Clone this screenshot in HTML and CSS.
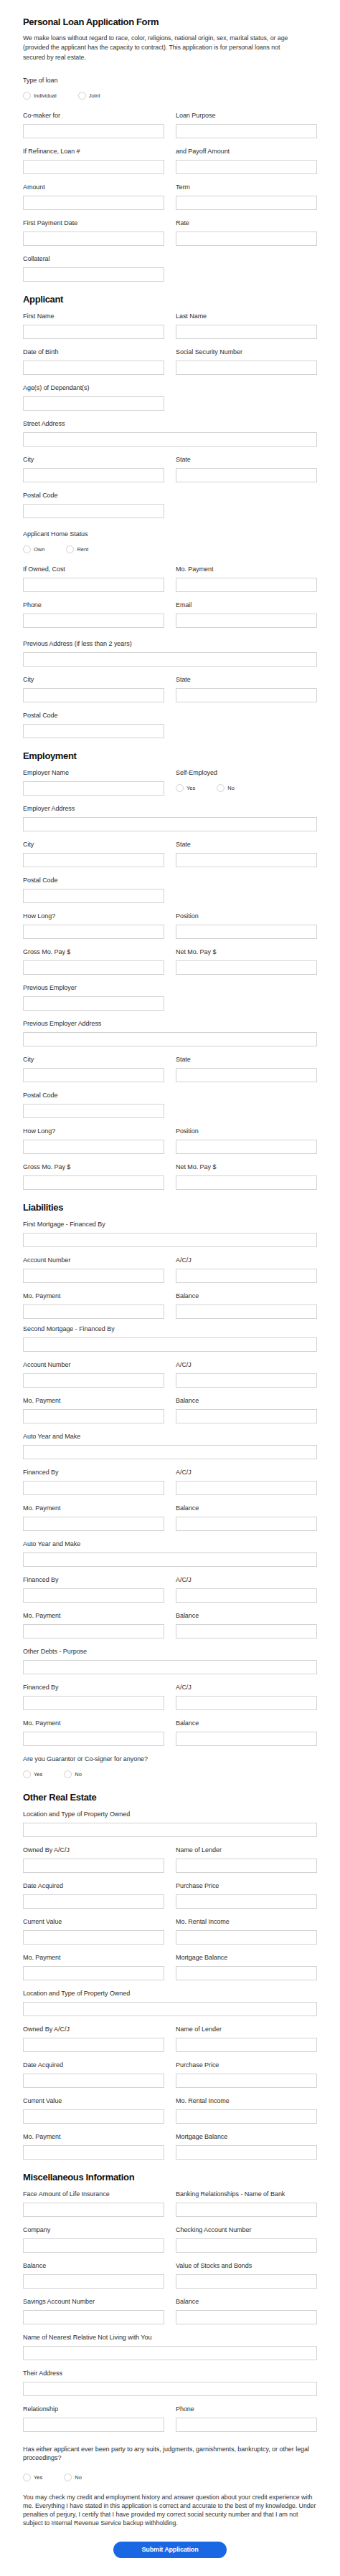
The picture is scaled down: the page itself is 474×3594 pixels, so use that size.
FILE: index.html
```html
<!DOCTYPE html>
<html lang="en">
<head>
<meta charset="utf-8">
<title>Personal Loan Application Form</title>
<link rel="stylesheet" href="styles.css">
</head>
<body>
<main class="page">
  <h1 class="title">Personal Loan Application Form</h1>
  <p class="intro">We make loans without regard to race, color, religions, national origin, sex, marital status, or age (provided the applicant has the capacity to contract). This application is for personal loans not secured by real estate.</p>

  <form class="form">
    <div class="radio-group">
      <span class="label">Type of loan</span>
      <div class="options">
        <label class="opt"><input type="radio" name="type"><span>Individual</span></label>
        <label class="opt"><input type="radio" name="type"><span>Joint</span></label>
      </div>
    </div>
    <div class="row">
      <div class="field"><label class="label">Co-maker for</label><input class="input" type="text"></div>
      <div class="field"><label class="label">Loan Purpose</label><input class="input" type="text"></div>
    </div>
    <div class="row">
      <div class="field"><label class="label">If Refinance, Loan #</label><input class="input" type="text"></div>
      <div class="field"><label class="label">and Payoff Amount</label><input class="input" type="text"></div>
    </div>
    <div class="row">
      <div class="field"><label class="label">Amount</label><input class="input" type="text"></div>
      <div class="field"><label class="label">Term</label><input class="input" type="text"></div>
    </div>
    <div class="row">
      <div class="field"><label class="label">First Payment Date</label><input class="input" type="text"></div>
      <div class="field"><label class="label">Rate</label><input class="input" type="text"></div>
    </div>
    <div class="row">
      <div class="field"><label class="label">Collateral</label><input class="input" type="text"></div>
    </div>

    <h2 class="section">Applicant</h2>
    <div class="row">
      <div class="field"><label class="label">First Name</label><input class="input" type="text"></div>
      <div class="field"><label class="label">Last Name</label><input class="input" type="text"></div>
    </div>
    <div class="row">
      <div class="field"><label class="label">Date of Birth</label><input class="input" type="text"></div>
      <div class="field"><label class="label">Social Security Number</label><input class="input" type="text"></div>
    </div>
    <div class="row">
      <div class="field"><label class="label">Age(s) of Dependant(s)</label><input class="input" type="text"></div>
    </div>
    <div class="row">
      <div class="field full"><label class="label">Street Address</label><input class="input" type="text"></div>
    </div>
    <div class="row">
      <div class="field"><label class="label">City</label><input class="input" type="text"></div>
      <div class="field"><label class="label">State</label><input class="input" type="text"></div>
    </div>
    <div class="row">
      <div class="field"><label class="label">Postal Code</label><input class="input" type="text"></div>
    </div>
    <div class="radio-group spaced">
      <span class="label">Applicant Home Status</span>
      <div class="options">
        <label class="opt"><input type="radio" name="home"><span>Own</span></label>
        <label class="opt"><input type="radio" name="home"><span>Rent</span></label>
      </div>
    </div>
    <div class="row">
      <div class="field"><label class="label">If Owned, Cost</label><input class="input" type="text"></div>
      <div class="field"><label class="label">Mo. Payment</label><input class="input" type="text"></div>
    </div>
    <div class="row">
      <div class="field"><label class="label">Phone</label><input class="input" type="text"></div>
      <div class="field"><label class="label">Email</label><input class="input" type="text"></div>
    </div>
    <div class="row spaced">
      <div class="field full"><label class="label">Previous Address (if less than 2 years)</label><input class="input" type="text"></div>
    </div>
    <div class="row">
      <div class="field"><label class="label">City</label><input class="input" type="text"></div>
      <div class="field"><label class="label">State</label><input class="input" type="text"></div>
    </div>
    <div class="row">
      <div class="field"><label class="label">Postal Code</label><input class="input" type="text"></div>
    </div>

    <h2 class="section">Employment</h2>
    <div class="row">
      <div class="field"><label class="label">Employer Name</label><input class="input" type="text"></div>
      <div class="field">
        <span class="label">Self-Employed</span>
        <div class="options">
          <label class="opt"><input type="radio" name="self"><span>Yes</span></label>
          <label class="opt"><input type="radio" name="self"><span>No</span></label>
        </div>
      </div>
    </div>
    <div class="row">
      <div class="field full"><label class="label">Employer Address</label><input class="input" type="text"></div>
    </div>
    <div class="row">
      <div class="field"><label class="label">City</label><input class="input" type="text"></div>
      <div class="field"><label class="label">State</label><input class="input" type="text"></div>
    </div>
    <div class="row">
      <div class="field"><label class="label">Postal Code</label><input class="input" type="text"></div>
    </div>
    <div class="row">
      <div class="field"><label class="label">How Long?</label><input class="input" type="text"></div>
      <div class="field"><label class="label">Position</label><input class="input" type="text"></div>
    </div>
    <div class="row">
      <div class="field"><label class="label">Gross Mo. Pay $</label><input class="input" type="text"></div>
      <div class="field"><label class="label">Net Mo. Pay $</label><input class="input" type="text"></div>
    </div>
    <div class="row">
      <div class="field"><label class="label">Previous Employer</label><input class="input" type="text"></div>
    </div>
    <div class="row">
      <div class="field full"><label class="label">Previous Employer Address</label><input class="input" type="text"></div>
    </div>
    <div class="row">
      <div class="field"><label class="label">City</label><input class="input" type="text"></div>
      <div class="field"><label class="label">State</label><input class="input" type="text"></div>
    </div>
    <div class="row">
      <div class="field"><label class="label">Postal Code</label><input class="input" type="text"></div>
    </div>
    <div class="row">
      <div class="field"><label class="label">How Long?</label><input class="input" type="text"></div>
      <div class="field"><label class="label">Position</label><input class="input" type="text"></div>
    </div>
    <div class="row">
      <div class="field"><label class="label">Gross Mo. Pay $</label><input class="input" type="text"></div>
      <div class="field"><label class="label">Net Mo. Pay $</label><input class="input" type="text"></div>
    </div>

    <h2 class="section">Liabilities</h2>
    <div class="row">
      <div class="field full"><label class="label">First Mortgage - Financed By</label><input class="input" type="text"></div>
    </div>
    <div class="row">
      <div class="field"><label class="label">Account Number</label><input class="input" type="text"></div>
      <div class="field"><label class="label">A/C/J</label><input class="input" type="text"></div>
    </div>
    <div class="row">
      <div class="field"><label class="label">Mo. Payment</label><input class="input" type="text"></div>
      <div class="field"><label class="label">Balance</label><input class="input" type="text"></div>
    </div>
    <div class="row tight">
      <div class="field full"><label class="label">Second Mortgage - Financed By</label><input class="input" type="text"></div>
    </div>
    <div class="row">
      <div class="field"><label class="label">Account Number</label><input class="input" type="text"></div>
      <div class="field"><label class="label">A/C/J</label><input class="input" type="text"></div>
    </div>
    <div class="row">
      <div class="field"><label class="label">Mo. Payment</label><input class="input" type="text"></div>
      <div class="field"><label class="label">Balance</label><input class="input" type="text"></div>
    </div>
    <div class="row">
      <div class="field full"><label class="label">Auto Year and Make</label><input class="input" type="text"></div>
    </div>
    <div class="row">
      <div class="field"><label class="label">Financed By</label><input class="input" type="text"></div>
      <div class="field"><label class="label">A/C/J</label><input class="input" type="text"></div>
    </div>
    <div class="row">
      <div class="field"><label class="label">Mo. Payment</label><input class="input" type="text"></div>
      <div class="field"><label class="label">Balance</label><input class="input" type="text"></div>
    </div>
    <div class="row">
      <div class="field full"><label class="label">Auto Year and Make</label><input class="input" type="text"></div>
    </div>
    <div class="row">
      <div class="field"><label class="label">Financed By</label><input class="input" type="text"></div>
      <div class="field"><label class="label">A/C/J</label><input class="input" type="text"></div>
    </div>
    <div class="row">
      <div class="field"><label class="label">Mo. Payment</label><input class="input" type="text"></div>
      <div class="field"><label class="label">Balance</label><input class="input" type="text"></div>
    </div>
    <div class="row">
      <div class="field full"><label class="label">Other Debts - Purpose</label><input class="input" type="text"></div>
    </div>
    <div class="row">
      <div class="field"><label class="label">Financed By</label><input class="input" type="text"></div>
      <div class="field"><label class="label">A/C/J</label><input class="input" type="text"></div>
    </div>
    <div class="row">
      <div class="field"><label class="label">Mo. Payment</label><input class="input" type="text"></div>
      <div class="field"><label class="label">Balance</label><input class="input" type="text"></div>
    </div>
    <div class="radio-group">
      <span class="label">Are you Guarantor or Co-signer for anyone?</span>
      <div class="options">
        <label class="opt"><input type="radio" name="guar"><span>Yes</span></label>
        <label class="opt"><input type="radio" name="guar"><span>No</span></label>
      </div>
    </div>

    <h2 class="section after-radio">Other Real Estate</h2>
    <div class="row">
      <div class="field full"><label class="label">Location and Type of Property Owned</label><input class="input" type="text"></div>
    </div>
    <div class="row">
      <div class="field"><label class="label">Owned By A/C/J</label><input class="input" type="text"></div>
      <div class="field"><label class="label">Name of Lender</label><input class="input" type="text"></div>
    </div>
    <div class="row">
      <div class="field"><label class="label">Date Acquired</label><input class="input" type="text"></div>
      <div class="field"><label class="label">Purchase Price</label><input class="input" type="text"></div>
    </div>
    <div class="row">
      <div class="field"><label class="label">Current Value</label><input class="input" type="text"></div>
      <div class="field"><label class="label">Mo. Rental Income</label><input class="input" type="text"></div>
    </div>
    <div class="row">
      <div class="field"><label class="label">Mo. Payment</label><input class="input" type="text"></div>
      <div class="field"><label class="label">Mortgage Balance</label><input class="input" type="text"></div>
    </div>
    <div class="row">
      <div class="field full"><label class="label">Location and Type of Property Owned</label><input class="input" type="text"></div>
    </div>
    <div class="row">
      <div class="field"><label class="label">Owned By A/C/J</label><input class="input" type="text"></div>
      <div class="field"><label class="label">Name of Lender</label><input class="input" type="text"></div>
    </div>
    <div class="row">
      <div class="field"><label class="label">Date Acquired</label><input class="input" type="text"></div>
      <div class="field"><label class="label">Purchase Price</label><input class="input" type="text"></div>
    </div>
    <div class="row">
      <div class="field"><label class="label">Current Value</label><input class="input" type="text"></div>
      <div class="field"><label class="label">Mo. Rental Income</label><input class="input" type="text"></div>
    </div>
    <div class="row">
      <div class="field"><label class="label">Mo. Payment</label><input class="input" type="text"></div>
      <div class="field"><label class="label">Mortgage Balance</label><input class="input" type="text"></div>
    </div>

    <h2 class="section">Miscellaneous Information</h2>
    <div class="row">
      <div class="field"><label class="label">Face Amount of Life Insurance</label><input class="input" type="text"></div>
      <div class="field"><label class="label">Banking Relationships - Name of Bank</label><input class="input" type="text"></div>
    </div>
    <div class="row">
      <div class="field"><label class="label">Company</label><input class="input" type="text"></div>
      <div class="field"><label class="label">Checking Account Number</label><input class="input" type="text"></div>
    </div>
    <div class="row">
      <div class="field"><label class="label">Balance</label><input class="input" type="text"></div>
      <div class="field"><label class="label">Value of Stocks and Bonds</label><input class="input" type="text"></div>
    </div>
    <div class="row">
      <div class="field"><label class="label">Savings Account Number</label><input class="input" type="text"></div>
      <div class="field"><label class="label">Balance</label><input class="input" type="text"></div>
    </div>
    <div class="row">
      <div class="field full"><label class="label">Name of Nearest Relative Not Living with You</label><input class="input" type="text"></div>
    </div>
    <div class="row">
      <div class="field full"><label class="label">Their Address</label><input class="input" type="text"></div>
    </div>
    <div class="row">
      <div class="field"><label class="label">Relationship</label><input class="input" type="text"></div>
      <div class="field"><label class="label">Phone</label><input class="input" type="text"></div>
    </div>
    <div class="radio-group legal">
      <span class="label">Has either applicant ever been party to any suits, judgments, garnishments, bankruptcy, or other legal proceedings?</span>
      <div class="options">
        <label class="opt"><input type="radio" name="legal"><span>Yes</span></label>
        <label class="opt"><input type="radio" name="legal"><span>No</span></label>
      </div>
    </div>
    <p class="consent">You may check my credit and employment history and answer question about your credit experience with me. Everything I have stated in this application is correct and accurate to the best of my knowledge. Under penalties of perjury, I certify that I have provided my correct social security number and that I am not subject to Internal Revenue Service backup withholding.</p>
    <div class="actions">
      <button class="submit" type="button">Submit Application</button>
    </div>
  </form>
</main>
</body>
</html>
```

FILE: styles.css
```css
* {
  box-sizing: border-box;
}

body {
  margin: 0;
  background: #ffffff;
  font-family: "Liberation Sans", Arial, sans-serif;
  color: #2e2e2e;
}

.page {
  width: 474px;
  padding: 23px 32px 25px;
}

.title {
  margin: 0;
  font-size: 13px;
  line-height: 16px;
  font-weight: 700;
  letter-spacing: -0.35px;
  color: #111111;
}

.intro {
  margin: 8px 0 0;
  max-width: 380px;
  font-size: 8.8px;
  line-height: 13.33px;
  letter-spacing: -0.05px;
  color: #333333;
}

.form {
  margin-top: 19px;
  display: flex;
  flex-direction: column;
  gap: 12px;
}

.row {
  display: grid;
  grid-template-columns: 1fr 1fr;
  column-gap: 16px;
}

.row.spaced {
  margin-top: 4px;
}

.row.tight {
  margin-top: -4px;
}

.field {
  display: flex;
  flex-direction: column;
  min-width: 0;
}

.field.full {
  grid-column: 1 / -1;
}

.label {
  display: block;
  font-size: 9px;
  line-height: 12px;
  letter-spacing: -0.05px;
  color: #2e2e2e;
  white-space: normal;
}

.field > .label {
  margin-bottom: 6px;
}

.input {
  display: block;
  width: 100%;
  height: 20px;
  margin: 0;
  padding: 0 6px;
  border: 1px solid #d2d2d2;
  border-radius: 0;
  background: #ffffff;
  font: inherit;
  font-size: 9px;
  -webkit-appearance: none;
  appearance: none;
}

.radio-group {
  display: flex;
  flex-direction: column;
  margin-bottom: 2px;
}

.radio-group.spaced {
  margin-top: 4px;
}

.options {
  display: flex;
  align-items: center;
  gap: 30px;
  height: 14px;
  margin-top: 9px;
}

.field > .options {
  margin-top: 3px;
}

.opt {
  display: flex;
  align-items: center;
  gap: 4px;
  font-size: 7.5px;
  line-height: 10px;
  color: #333333;
}

.opt input {
  -webkit-appearance: none;
  appearance: none;
  width: 11px;
  height: 11px;
  margin: 0;
  border: 1px solid #cfcfcf;
  border-radius: 50%;
  background: #ffffff;
}

.section {
  margin: 5px 0 -3px;
  font-size: 13px;
  line-height: 16px;
  font-weight: 700;
  letter-spacing: -0.35px;
  color: #111111;
}

.section.after-radio {
  margin-top: 3px;
}

.radio-group.legal {
  margin-top: 6px;
}

.radio-group.legal .options {
  margin-top: 15px;
}

.consent {
  margin: 0;
  font-size: 8.8px;
  line-height: 12px;
  letter-spacing: -0.05px;
  color: #333333;
}

.actions {
  display: flex;
  justify-content: center;
  margin-top: 8px;
}

.submit {
  width: 158px;
  height: 23px;
  margin: 0;
  padding: 0;
  border: none;
  border-radius: 12px;
  background: #1a67e3;
  color: #ffffff;
  font-family: "Liberation Sans", Arial, sans-serif;
  font-size: 9px;
  font-weight: 700;
  letter-spacing: -0.15px;
}
```
